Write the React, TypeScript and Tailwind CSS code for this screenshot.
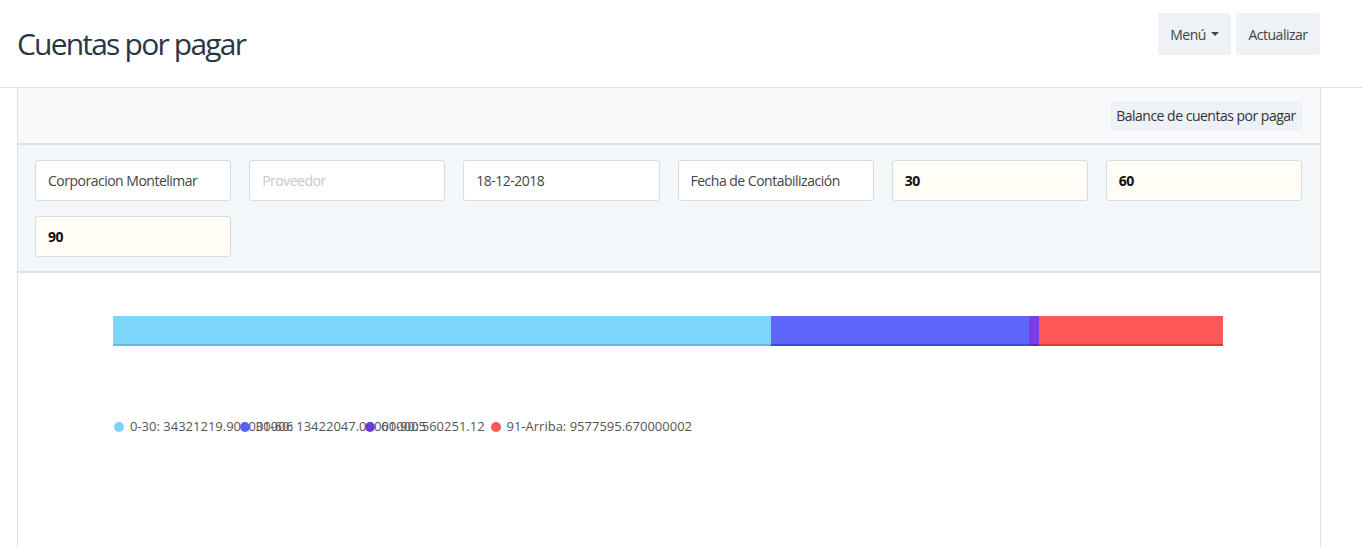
const segments = [
  { label: "0-30", value: 34321219.900000006, text: "34321219.900000006", bar: "bg-[#7dd6fd] border-[#5cbde2]", dot: "bg-[#7dd3fc]" },
  { label: "31-60", value: 13422047.000000005, text: "13422047.000000005", bar: "bg-[#5f66fe] border-[#3f46e0]", dot: "bg-[#5b5ff8]" },
  { label: "61-90", value: 560251.12, text: "560251.12", bar: "bg-[#7a3fdf] border-[#5a2fbf]", dot: "bg-[#6a3ae0]" },
  { label: "91-Arriba", value: 9577595.670000002, text: "9577595.670000002", bar: "bg-[#ff5757] border-[#e03a3a]", dot: "bg-[#ff5555]" },
];

function Field({ value, placeholder, yellow }: { value?: string; placeholder?: string; yellow?: boolean }) {
  return (
    <div
      className={
        "h-[41px] flex items-center px-3 rounded-[3px] border border-[#d6dce3] text-[14px] tracking-[-0.5px] " +
        (yellow ? "bg-[#fffdf5] font-bold text-[#111]" : "bg-white text-[#444]")
      }
    >
      {value ? value : <span className="text-[#c3c9cf]">{placeholder}</span>}
    </div>
  );
}

export default function App() {
  const total = segments.reduce((s, x) => s + x.value, 0);
  return (
    <div className="w-[1362px] h-[547px] overflow-hidden bg-white font-['Open_Sans',sans-serif] text-[#444]">
      <header className="h-[88px] flex items-start justify-between border-b border-[#dfe3e8] pl-[17px] pr-[42px]">
        <h1 className="mt-[22px] text-[30px] leading-[44px] text-[#2b3644] tracking-[-1.8px]">Cuentas por pagar</h1>
        <div className="mt-[13px] flex gap-[5px] tracking-[-0.5px]">
          <button className="h-[42px] w-[73px] rounded-[3px] bg-[#eef1f5] text-[14px] text-[#444] flex items-center justify-center gap-[5px]">
            Menú
            <span className="w-0 h-0 border-l-[4px] border-r-[4px] border-t-[4px] border-l-transparent border-r-transparent border-t-[#444]" />
          </button>
          <button className="h-[42px] w-[84px] rounded-[3px] bg-[#eef1f5] text-[14px] text-[#444]">Actualizar</button>
        </div>
      </header>

      <section className="ml-[17px] w-[1304px] border-l border-r border-[#dde2e7]">
        <div className="h-[57px] bg-[#f8f9fb] border-b-2 border-[#dde2e7] flex items-center justify-end pr-[18px]">
          <button className="h-[30px] w-[192px] rounded-[3px] bg-[#eef1f5] text-[14px] tracking-[-0.5px] text-[#333]">
            Balance de cuentas por pagar
          </button>
        </div>
        <div className="bg-[#f4f7fa] border-b-2 border-[#dde2e7] pt-[15px] pb-[14px] pl-[17px] pr-[18px] grid grid-cols-6 gap-x-[18px] gap-y-[15px]">
          <Field value="Corporacion Montelimar" />
          <Field placeholder="Proveedor" />
          <Field value="18-12-2018" />
          <Field value="Fecha de Contabilización" />
          <Field value="30" yellow />
          <Field value="60" yellow />
          <Field value="90" yellow />
        </div>
        <div className="h-[280px] pt-[43px] pl-[95px] pr-[97px]">
          <div className="flex h-[30px]">
            {segments.map((s) => (
              <div
                key={s.label}
                className={"h-full border-b-2 " + s.bar}
                style={{ width: `${(s.value / total) * 100}%` }}
              />
            ))}
          </div>
          <div className="mt-[71px] ml-[1px] flex text-[13px] text-[#555]">
            {segments.map((s) => (
              <div key={s.label} className="w-[125.5px] shrink-0 flex items-center gap-[6px] whitespace-nowrap">
                <span className={"w-[10px] h-[10px] rounded-full shrink-0 " + s.dot} />
                <span>
                  {s.label}: {s.text}
                </span>
              </div>
            ))}
          </div>
        </div>
      </section>
    </div>
  );
}
